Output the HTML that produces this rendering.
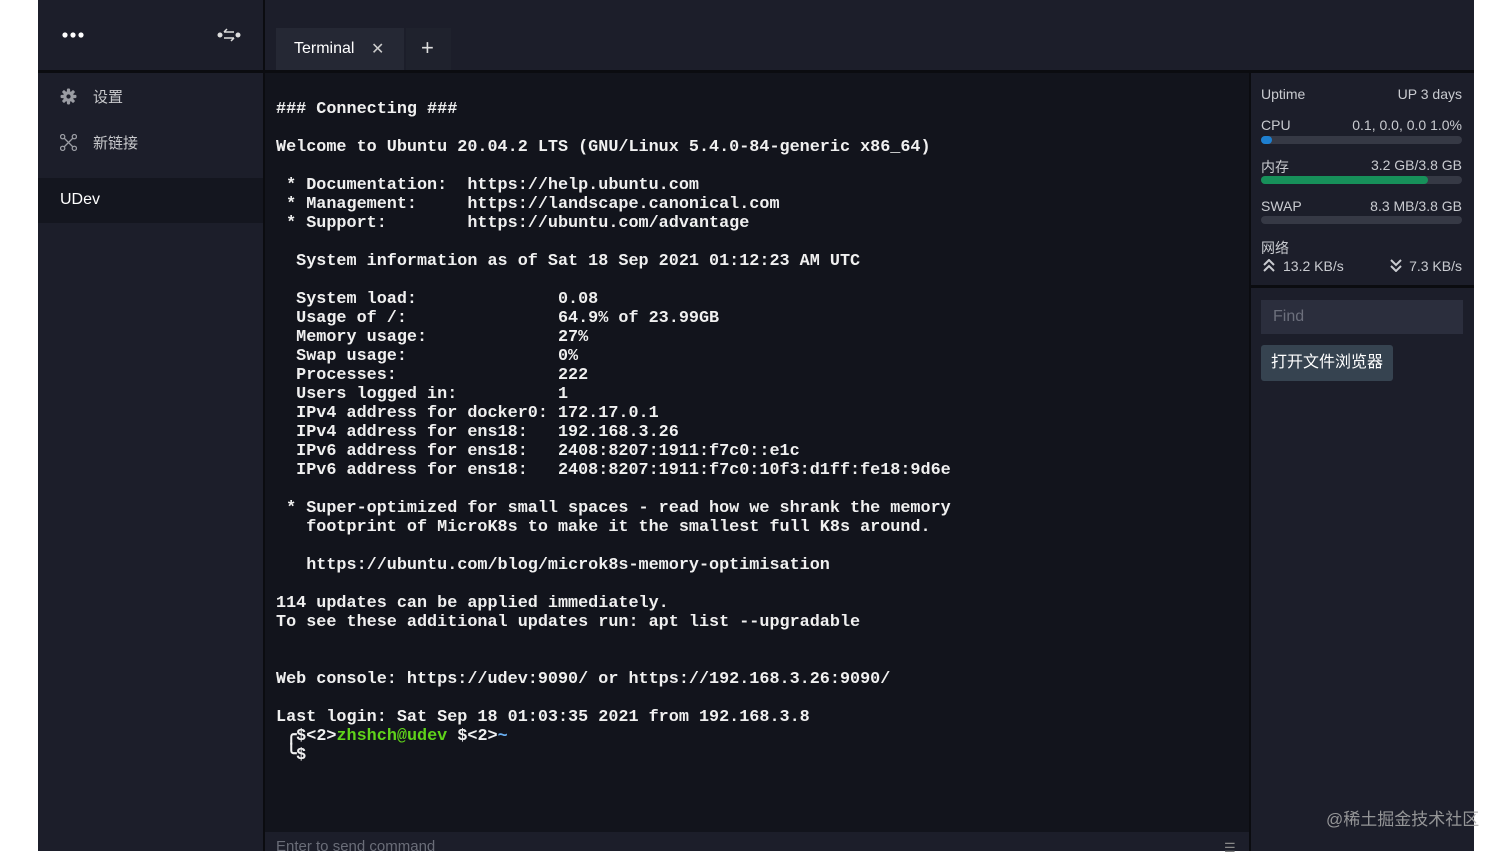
<!DOCTYPE html>
<html><head><meta charset="utf-8"><style>
*{margin:0;padding:0;box-sizing:border-box}
body{width:1512px;height:851px;background:#fff;position:relative;overflow:hidden;font-family:"Liberation Sans","Noto Sans CJK SC",sans-serif}
.app{position:absolute;left:38px;top:0;width:1436px;height:851px;background:#0b0c10}
.a{position:absolute;white-space:nowrap}
.side{left:0;top:0;width:225px;height:851px;background:#1c1e2a}
.head{left:227px;top:0;width:1209px;height:70px;background:#1c1e2a}
.term{left:227px;top:73px;width:984px;height:778px;background:#12141c}
.right{left:1213px;top:73px;width:223px;height:212px;background:#1c1e2a}
.right2{left:1213px;top:288px;width:223px;height:563px;background:#1c1e2a}
pre.a{white-space:pre;font-family:"Liberation Mono",monospace;font-weight:bold;font-size:16.8px;line-height:19px;color:#f0f0f0}
.g{color:#5fd31a}
.t{color:#c8c9cc;font-size:15px}
.r{font-size:14px;color:#c9cbd0}
</style></head><body>
<div class="app">
<div class="a side"></div>
<svg class="a" style="left:24px;top:32px" width="22" height="6" viewBox="0 0 22 6"><circle cx="3" cy="3" r="2.6" fill="#fff"/><circle cx="11" cy="3" r="2.6" fill="#fff"/><circle cx="19" cy="3" r="2.6" fill="#fff"/></svg>
<svg class="a" style="left:179px;top:27px" width="24" height="16" viewBox="0 0 24 16"><circle cx="3" cy="8" r="2.5" fill="#ddd"/><circle cx="21" cy="8" r="2.5" fill="#ddd"/><path d="M7 5h10M7 5l3-3M17 11H7M17 11l-3 3" stroke="#ddd" stroke-width="1.5" fill="none"/></svg>
<div class="a" style="left:0;top:70px;width:225px;height:3px;background:#0b0c10"></div>
<svg class="a" style="left:22px;top:88px" width="17" height="17" viewBox="0 0 16 16"><g fill="#9a9ca3"><circle cx="8" cy="8" r="5"/><rect x="6.5" y="0.5" width="3" height="15" rx="1"/><rect x="0.5" y="6.5" width="15" height="3" rx="1"/><rect x="6.5" y="0.5" width="3" height="15" rx="1" transform="rotate(45 8 8)"/><rect x="6.5" y="0.5" width="3" height="15" rx="1" transform="rotate(-45 8 8)"/></g><circle cx="8" cy="8" r="2" fill="#1c1e2a"/></svg>
<div class="a t" style="left:55px;top:86px">设置</div>
<svg class="a" style="left:22px;top:134px" width="17" height="17" viewBox="0 0 16 16"><g stroke="#9a9ca3" stroke-width="1.2" fill="none"><path d="M4 4l8 8M12 4l-8 8"/><circle cx="2.5" cy="2.5" r="2"/><circle cx="13.5" cy="2.5" r="2"/><circle cx="2.5" cy="13.5" r="2"/><circle cx="13.5" cy="13.5" r="2"/></g></svg>
<div class="a t" style="left:55px;top:132px">新链接</div>
<div class="a" style="left:0;top:178px;width:225px;height:45px;background:#14161f"></div>
<div class="a" style="left:22px;top:191px;color:#fff;font-size:16px">UDev</div>
<div class="a head"></div>
<div class="a" style="left:238px;top:28px;width:128px;height:42px;background:#252834"></div>
<div class="a" style="left:256px;top:40px;color:#fff;font-size:16px">Terminal</div>
<div class="a" style="left:333px;top:39px;color:#ccc;font-size:16px">✕</div>
<div class="a" style="left:368px;top:28px;width:45px;height:42px;background:#1f222d"></div>
<div class="a" style="left:383px;top:35px;color:#ddd;font-size:22px;font-weight:300">+</div>
<div class="a term"></div>
<pre class="a" style="left:238px;top:100px">### Connecting ###

Welcome to Ubuntu 20.04.2 LTS (GNU/Linux 5.4.0-84-generic x86_64)

 * Documentation:  https://help.ubuntu.com
 * Management:     https://landscape.canonical.com
 * Support:        https://ubuntu.com/advantage

  System information as of Sat 18 Sep 2021 01:12:23 AM UTC

  System load:              0.08
  Usage of /:               64.9% of 23.99GB
  Memory usage:             27%
  Swap usage:               0%
  Processes:                222
  Users logged in:          1
  IPv4 address for docker0: 172.17.0.1
  IPv4 address for ens18:   192.168.3.26
  IPv6 address for ens18:   2408:8207:1911:f7c0::e1c
  IPv6 address for ens18:   2408:8207:1911:f7c0:10f3:d1ff:fe18:9d6e

 * Super-optimized for small spaces - read how we shrank the memory
   footprint of MicroK8s to make it the smallest full K8s around.

   https://ubuntu.com/blog/microk8s-memory-optimisation

114 updates can be applied immediately.
To see these additional updates run: apt list --upgradable


Web console: https://udev:9090/ or https://192.168.3.26:9090/

Last login: Sat Sep 18 01:03:35 2021 from 192.168.3.8
 ╭$&lt;2&gt;<span class="g">zhshch@udev</span> $&lt;2&gt;<span style="color:#6ab0f3">~</span>
 ╰$</pre>
<div class="a" style="left:227px;top:832px;width:984px;height:19px;background:#1c1e2a"></div>
<div class="a" style="left:238px;top:838px;color:#6a6d78;font-size:15px">Enter to send command</div>
<div class="a" style="left:1186px;top:840px;color:#888;font-size:13px">☰</div>
<div class="a right"></div>
<div class="a right2"></div>
<div class="a r" style="left:1223px;top:86px">Uptime</div><div class="a r" style="right:12px;top:86px">UP 3 days</div>
<div class="a r" style="left:1223px;top:117px">CPU</div><div class="a r" style="right:12px;top:117px">0.1, 0.0, 0.0 1.0%</div>
<div class="a" style="left:1223px;top:136px;width:201px;height:8px;border-radius:4px;background:#363945"><div style="width:11px;height:8px;border-radius:4px;background:#1e7fd0"></div></div>
<div class="a r" style="left:1223px;top:157px">内存</div><div class="a r" style="right:12px;top:157px">3.2 GB/3.8 GB</div>
<div class="a" style="left:1223px;top:176px;width:201px;height:8px;border-radius:4px;background:#363945"><div style="width:167px;height:8px;border-radius:4px;background:#17905a"></div></div>
<div class="a r" style="left:1223px;top:198px">SWAP</div><div class="a r" style="right:12px;top:198px">8.3 MB/3.8 GB</div>
<div class="a" style="left:1223px;top:216px;width:201px;height:8px;border-radius:4px;background:#363945"></div>
<div class="a r" style="left:1223px;top:238px">网络</div>
<svg class="a" style="left:1225px;top:259px" width="12" height="13" viewBox="0 0 12 13"><path d="M1 6l5-5 5 5M1 12l5-5 5 5" stroke="#c9cbd0" stroke-width="2" fill="none"/></svg>
<div class="a r" style="left:1245px;top:258px">13.2 KB/s</div>
<svg class="a" style="left:1352px;top:259px" width="12" height="13" viewBox="0 0 12 13"><path d="M1 1l5 5 5-5M1 7l5 5 5-5" stroke="#c9cbd0" stroke-width="2" fill="none"/></svg>
<div class="a r" style="right:12px;top:258px">7.3 KB/s</div>
<div class="a" style="left:1223px;top:300px;width:202px;height:34px;background:#2b2e3d"></div>
<div class="a" style="left:1235px;top:308px;color:#6c6f7c;font-size:16px">Find</div>
<div class="a" style="left:1223px;top:345px;width:132px;height:36px;background:#364350;border-radius:3px;color:#fff;font-size:16px;line-height:36px;text-align:center">打开文件浏览器</div>
</div>
<div class="a" style="left:1326px;top:805px;color:#aaa;font-size:17px;opacity:.85">@稀土掘金技术社区</div>
</body></html>
